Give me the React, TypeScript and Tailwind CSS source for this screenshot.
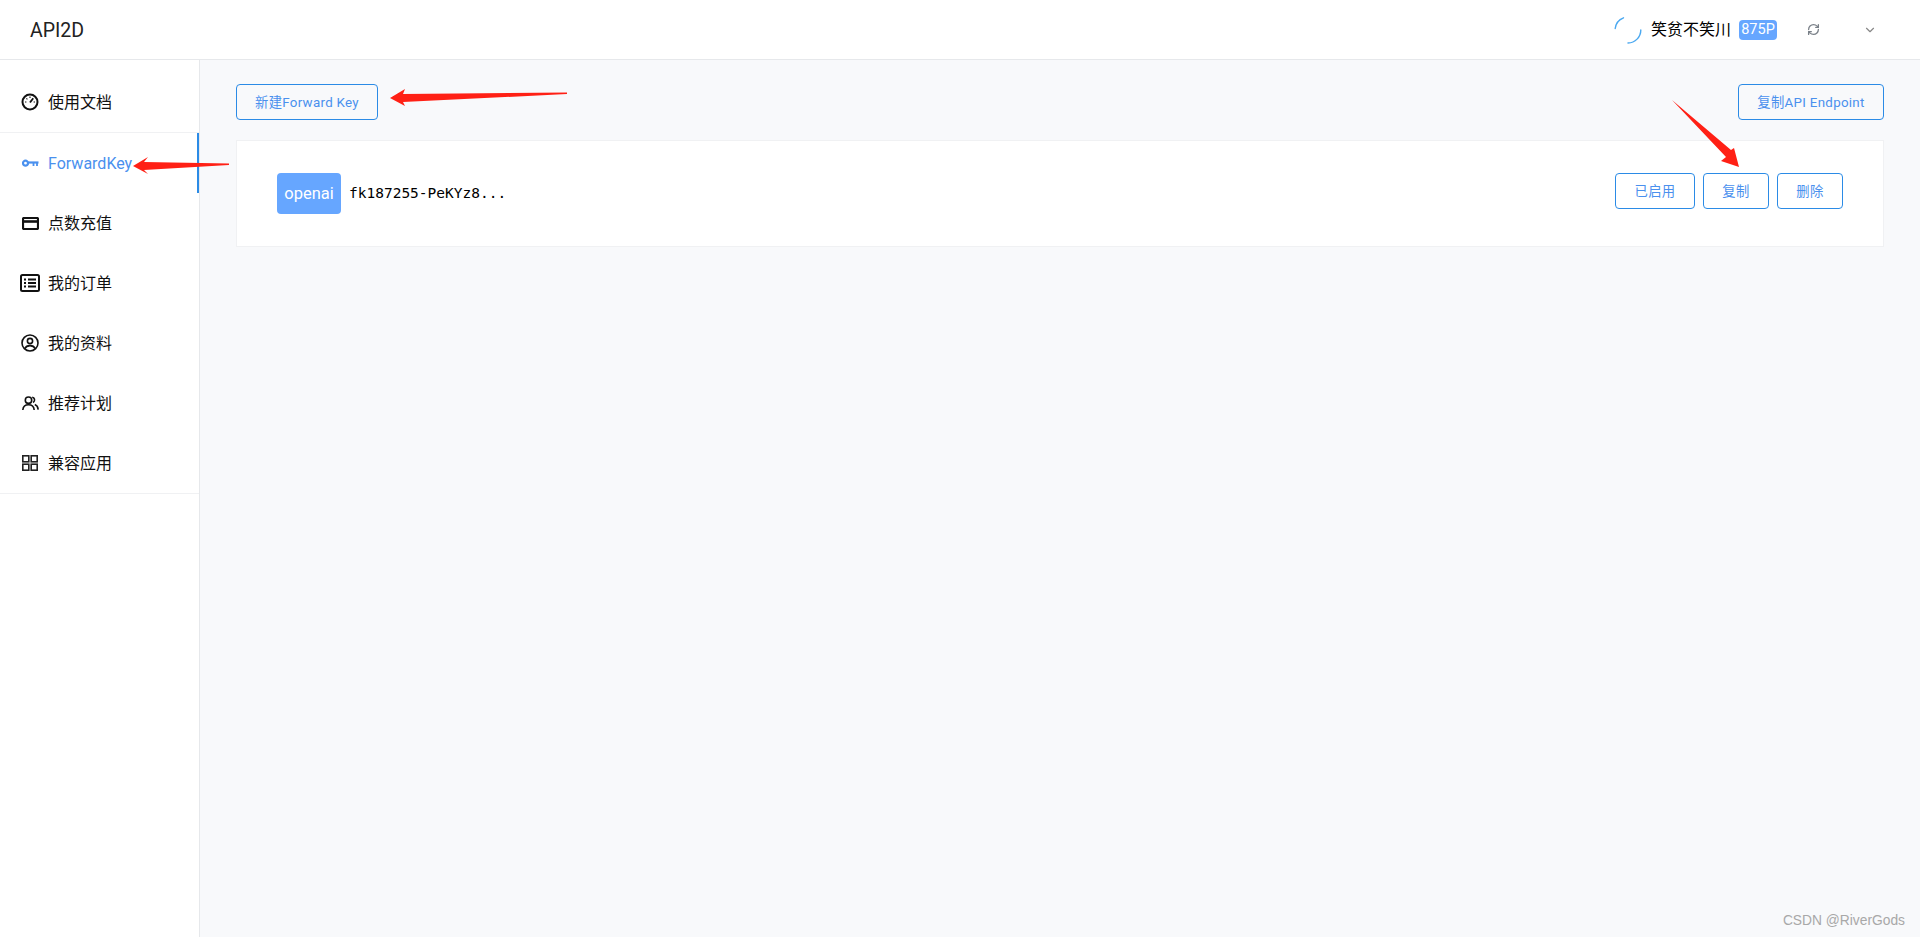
import React from 'react'
import { ChevronDown, RefreshCw } from 'lucide-react'

const GaugeIcon = () => (
  <svg width="18" height="18" viewBox="0 0 18 18" fill="none" stroke="currentColor" strokeWidth="2">
    <circle cx="9" cy="9" r="7.5" />
    <path d="M9 9.5 12.2 5.2" strokeWidth="1.8" />
    <path d="M9 3.600v1.400M4 9h1.400M5.400 5.400l1 1M12.600 9H14" strokeWidth="1.100" />
  </svg>
)

const KeyIcon = () => (
  <svg width="17" height="9" viewBox="0 0 17 9" fill="none" stroke="currentColor">
    <circle cx="3.500" cy="4.200" r="2.500" strokeWidth="2.200" />
    <path d="M6 3.500h10.500" strokeWidth="2.200" />
    <path d="M11.500 3.500v3.500M15 3.500v3.500" strokeWidth="1.800" />
  </svg>
)

const CardIcon = () => (
  <svg width="17" height="13" viewBox="0 0 17 13" fill="none" stroke="currentColor">
    <rect x="1" y="1" width="15" height="11" rx="1" strokeWidth="2.200" />
    <path d="M1 4.500h15" strokeWidth="2.600" />
  </svg>
)

const ListIcon = () => (
  <svg width="20" height="18" viewBox="0 0 20 18" fill="none" stroke="currentColor">
    <rect x="1" y="1" width="18" height="16" rx="1.500" strokeWidth="2" />
    <path d="M4 5.500h2M4 9h2M4 12.500h2M8 5.500h8M8 9h8M8 12.500h8" strokeWidth="2" />
  </svg>
)

const ProfileIcon = () => (
  <svg width="18" height="18" viewBox="0 0 18 18" fill="none" stroke="currentColor" strokeWidth="1.600">
    <circle cx="9" cy="9" r="8" />
    <circle cx="9" cy="7" r="2.600" />
    <path d="M3.800 14.600c1-2.200 3-3 5.200-3s4.200.8 5.200 3" />
  </svg>
)

const PeopleIcon = () => (
  <svg width="17" height="15" viewBox="0 0 17 15" fill="none" stroke="currentColor" strokeWidth="1.600">
    <circle cx="6.500" cy="4.200" r="3.200" />
    <path d="M.8 14c.3-3.200 2.600-5.200 5.700-5.200s5.400 2 5.700 5.200" />
    <path d="M10.200 1.200c2.400.2 3.400 3.600 1 5.400" />
    <path d="M12.800 8.600c2 .8 3.200 2.800 3.400 5" />
  </svg>
)

const GridIcon = () => (
  <svg width="16" height="16" viewBox="0 0 16 16" fill="none" stroke="#222" strokeWidth="1.600">
    <rect x=".8" y=".8" width="6" height="6" />
    <rect x="9.200" y=".8" width="6" height="6" />
    <rect x=".8" y="9.200" width="6" height="6" />
    <rect x="9.200" y="9.200" width="6" height="6" />
  </svg>
)

const menu = [
  { label: '使用文档', icon: <GaugeIcon /> },
  { label: 'ForwardKey', icon: <KeyIcon />, active: true },
  { label: '点数充值', icon: <CardIcon /> },
  { label: '我的订单', icon: <ListIcon /> },
  { label: '我的资料', icon: <ProfileIcon /> },
  { label: '推荐计划', icon: <PeopleIcon /> },
  { label: '兼容应用', icon: <GridIcon /> },
]

function OutlineButton({ children, className }: { children: React.ReactNode; className: string }) {
  return (
    <button className={`h-9 pt-0.5 rounded border border-[#2b8be6] text-[13.33px] tracking-[0.3px] text-[#4a90ee] flex items-center justify-center ${className}`}>
      {children}
    </button>
  )
}

export default function App() {
  return (
    <div className="relative h-screen overflow-hidden flex flex-col bg-white text-[#111] font-['Roboto','Noto_Sans_CJK_SC',sans-serif]">
      <header className="h-[60px] shrink-0 border-b border-[#e6e8eb] flex items-center pl-[30px] pr-[43px]">
        <span className="pt-0.5 text-[19.5px] text-[#222]">API2D</span>
        <div className="ml-auto flex items-center">
          <svg width="28" height="28" viewBox="0 0 28 28" fill="none" stroke="#4aa8f0" strokeWidth="1.4" strokeLinecap="round">
            <path d="M1.200 12.500A13 13 0 0 1 9.500 1.800" />
            <path d="M26.800 14A13 13 0 0 1 14 27" />
          </svg>
          <span className="ml-[9px] text-[16px] text-black">笑贫不笑川</span>
          <span className="ml-2 h-5 w-[38px] rounded bg-[#66a6ff] text-white text-[14.5px] flex items-center justify-center">875P</span>
          <RefreshCw className="ml-[30px] text-[#7a8088]" size={13} strokeWidth={2.4} />
          <ChevronDown className="ml-[43px] text-[#888]" size={14} />
        </div>
      </header>

      <div className="flex-1 flex min-h-0">
        <aside className="w-[200px] shrink-0 border-r border-[#e6e8eb] pt-3">
          <nav className="border-b border-[#f0f1f3]">
            {menu.map((item, i) => (
              <div
                key={item.label}
                className={`relative flex items-center text-[16px] ${i === 1 ? 'h-[61px] border-t border-[#f0f1f3] text-[#4a90ee]' : 'h-[60px]'}`}
              >
                <span className="w-12 shrink-0 flex justify-center pl-3">{item.icon}</span>
                <span className="pt-0.5">{item.label}</span>
                {item.active && <span className="absolute right-0 inset-y-0 w-0.5 bg-[#2b8be6]" />}
              </div>
            ))}
          </nav>
        </aside>

        <main className="flex-1 bg-[#f8f9fb] pl-9 pr-9 pt-6">
          <div className="flex justify-between">
            <OutlineButton className="w-[142px]">新建Forward Key</OutlineButton>
            <OutlineButton className="w-[146px]">复制API Endpoint</OutlineButton>
          </div>
          <section className="mt-5 h-[107px] bg-white border border-[#f0f1f3] pl-10 pr-10 flex items-center">
            <span className="h-[41px] w-16 pt-0.5 rounded bg-[#66a6ff] text-white text-[16.5px] flex items-center justify-center">openai</span>
            <span className="ml-2 font-['DejaVu_Sans_Mono',monospace] text-[14.5px] text-black">fk187255-PeKYz8...</span>
            <div className="ml-auto flex gap-2 -mt-1.5">
              <OutlineButton className="w-20">已启用</OutlineButton>
              <OutlineButton className="w-[66px]">复制</OutlineButton>
              <OutlineButton className="w-[66px]">删除</OutlineButton>
            </div>
          </section>
        </main>
      </div>

      {/* red annotation arrows over the page */}
      <svg className="absolute inset-0 pointer-events-none" width="1920" height="937" fill="#ff2015">
        <polygon points="390,98 405,89 403,94 567,92.5 567,94 403,102 405,106" />
        <polygon points="133,166 148,157 144,162 229,163.5 229,165 144,170 148,174" />
        <polygon points="1672,100 1731,150 1734,148 1739,167 1721,161 1726,157" />
      </svg>

      <span className="absolute right-[15px] bottom-[5px] font-['Liberation_Sans',sans-serif] text-[13.8px] text-[#a8a8a8]">CSDN @RiverGods</span>
    </div>
  )
}
